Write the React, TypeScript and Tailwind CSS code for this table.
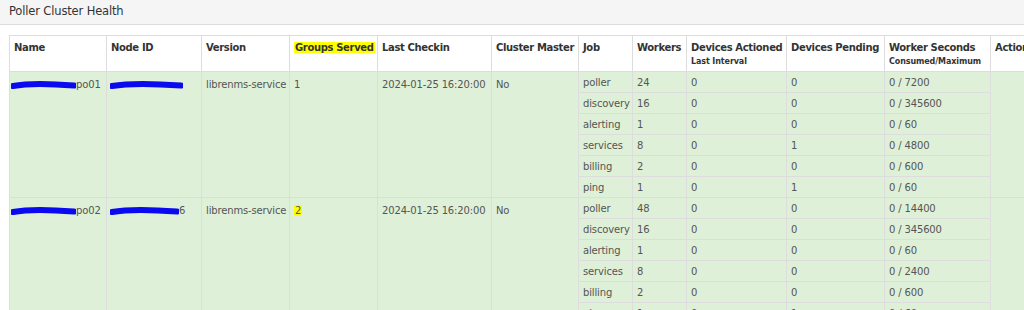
import React from "react";

type Job = { job: string; workers: number; actioned: number; pending: number; seconds: string };

type Poller = {
  suffix: string;
  nodeTail: string;
  version: string;
  groups: string;
  highlightGroups: boolean;
  checkin: string;
  master: string;
  jobs: Job[];
};

const pollers: Poller[] = [
  {
    suffix: "po01",
    nodeTail: "",
    version: "librenms-service",
    groups: "1",
    highlightGroups: false,
    checkin: "2024-01-25 16:20:00",
    master: "No",
    jobs: [
      { job: "poller", workers: 24, actioned: 0, pending: 0, seconds: "0 / 7200" },
      { job: "discovery", workers: 16, actioned: 0, pending: 0, seconds: "0 / 345600" },
      { job: "alerting", workers: 1, actioned: 0, pending: 0, seconds: "0 / 60" },
      { job: "services", workers: 8, actioned: 0, pending: 1, seconds: "0 / 4800" },
      { job: "billing", workers: 2, actioned: 0, pending: 0, seconds: "0 / 600" },
      { job: "ping", workers: 1, actioned: 0, pending: 1, seconds: "0 / 60" },
    ],
  },
  {
    suffix: "po02",
    nodeTail: "6",
    version: "librenms-service",
    groups: "2",
    highlightGroups: true,
    checkin: "2024-01-25 16:20:00",
    master: "No",
    jobs: [
      { job: "poller", workers: 48, actioned: 0, pending: 0, seconds: "0 / 14400" },
      { job: "discovery", workers: 16, actioned: 0, pending: 0, seconds: "0 / 345600" },
      { job: "alerting", workers: 1, actioned: 0, pending: 0, seconds: "0 / 60" },
      { job: "services", workers: 8, actioned: 0, pending: 0, seconds: "0 / 2400" },
      { job: "billing", workers: 2, actioned: 0, pending: 0, seconds: "0 / 600" },
      { job: "ping", workers: 1, actioned: 0, pending: 1, seconds: "0 / 60" },
    ],
  },
];

// blue marker scribble used to hide hostnames / node ids
const Scribble = ({ width }: { width: number }) => (
  <svg width={width} height="10" viewBox={`0 0 ${width} 10`} className="inline-block align-middle">
    <path
      d={`M2 6 C ${width * 0.3} 2.5, ${width * 0.6} 3.5, ${width - 2} 5.5`}
      stroke="#0a0af0"
      strokeWidth="6"
      strokeLinecap="round"
      fill="none"
    />
  </svg>
);

const th =
  "border border-[#dddddd] px-[4px] pt-[5px] pb-[3px] text-left align-top font-bold text-[#333333] whitespace-nowrap overflow-hidden tracking-[-0.35px] leading-[14px]";
const td = "border border-[#dddddd] px-[4px] h-[21px] align-middle whitespace-nowrap";
const tdTop = "border border-[#dddddd] px-[4px] pt-[5px] align-top whitespace-nowrap";

export default function App() {
  return (
    <div
      className="w-[1024px] h-[310px] overflow-hidden bg-white text-[10px] tracking-[-0.15px] text-[#555555]"
      style={{ fontFamily: '"DejaVu Sans", Verdana, sans-serif' }}
    >
      <div className="h-[25px] bg-[#f5f5f5] border-b border-[#dddddd] px-[9px] flex items-center text-[11.5px] text-[#333333]">
        Poller Cluster Health
      </div>
      <div className="pl-[9px] pt-[10px]">
        <table className="table-fixed border-collapse w-[1060px]">
          <colgroup>
            <col className="w-[97px]" />
            <col className="w-[95px]" />
            <col className="w-[88px]" />
            <col className="w-[88px]" />
            <col className="w-[114px]" />
            <col className="w-[87px]" />
            <col className="w-[54px]" />
            <col className="w-[54px]" />
            <col className="w-[100px]" />
            <col className="w-[98px]" />
            <col className="w-[106px]" />
            <col className="w-[79px]" />
          </colgroup>
          <thead>
            <tr className="h-[36px] bg-white">
              <th className={th}>Name</th>
              <th className={th}>Node ID</th>
              <th className={th}>Version</th>
              <th className={th}>
                <span className="bg-[#ffff00] px-[1px]">Groups Served</span>
              </th>
              <th className={th}>Last Checkin</th>
              <th className={th}>Cluster Master</th>
              <th className={th}>Job</th>
              <th className={th}>Workers</th>
              <th className={th}>
                Devices Actioned
                <div className="text-[8px] leading-[10px] mt-[2px] tracking-[-0.1px]">Last Interval</div>
              </th>
              <th className={th}>Devices Pending</th>
              <th className={th}>
                Worker Seconds
                <div className="text-[8px] leading-[10px] mt-[2px] tracking-[-0.1px]">Consumed/Maximum</div>
              </th>
              <th className={th}>Actions</th>
            </tr>
          </thead>
          <tbody className="bg-[#dff0d8]">
            {pollers.map((p) =>
              p.jobs.map((j, i) => (
                <tr key={p.suffix + j.job}>
                  {i === 0 && (
                    <>
                      <td rowSpan={p.jobs.length} className={tdTop + " pl-[1px]"}>
                        <Scribble width={65} />
                        <span>{p.suffix}</span>
                      </td>
                      <td rowSpan={p.jobs.length} className={tdTop + " pl-[3px]"}>
                        <Scribble width={p.nodeTail ? 69 : 73} />
                        <span>{p.nodeTail}</span>
                      </td>
                      <td rowSpan={p.jobs.length} className={tdTop}>
                        {p.version}
                      </td>
                      <td rowSpan={p.jobs.length} className={tdTop}>
                        <span className={p.highlightGroups ? "bg-[#ffff00] px-[1px]" : ""}>{p.groups}</span>
                      </td>
                      <td rowSpan={p.jobs.length} className={tdTop}>
                        {p.checkin}
                      </td>
                      <td rowSpan={p.jobs.length} className={tdTop}>
                        {p.master}
                      </td>
                    </>
                  )}
                  <td className={td}>{j.job}</td>
                  <td className={td}>{j.workers}</td>
                  <td className={td}>{j.actioned}</td>
                  <td className={td}>{j.pending}</td>
                  <td className={td}>{j.seconds}</td>
                  {i === 0 && <td rowSpan={p.jobs.length} className={tdTop}></td>}
                </tr>
              ))
            )}
          </tbody>
        </table>
      </div>
    </div>
  );
}
